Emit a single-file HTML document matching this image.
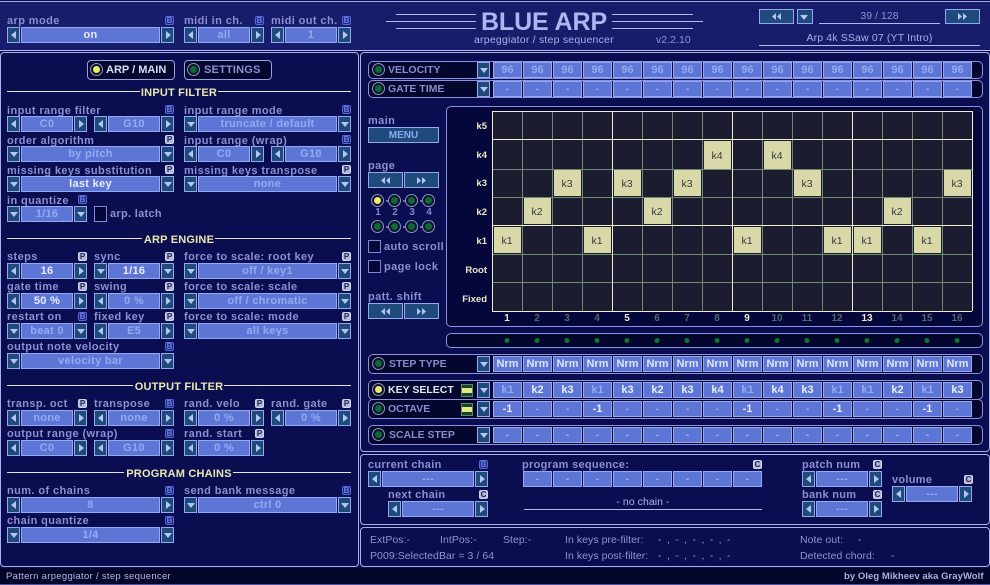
<!DOCTYPE html>
<html><head><meta charset="utf-8"><title>Blue Arp</title>
<style>
*{box-sizing:border-box}
html,body{margin:0;padding:0}
body{width:990px;height:585px;position:relative;overflow:hidden;background:#0a0d50;font-family:"Liberation Sans",sans-serif}
body div,body span{position:absolute}
.hd{left:0;top:1px;width:990px;height:50px;background:#171c6b;border-top:1px solid #a4abe8;border-bottom:1px solid #b4baf0}
.p{border:1px solid #aab0ea;border-radius:4px;background:#0a0d50}
.sb{background:#03042a;height:16px;top:568px;border-bottom:1px solid #4a52a0}
.l{margin-top:1px;font:bold 11px/12px "Liberation Sans",sans-serif;letter-spacing:.4px;color:#8a90d2;white-space:nowrap;height:12px}
.t{font:bold 11px/12px "Liberation Sans",sans-serif;letter-spacing:.2px;color:#e8e8b0;white-space:nowrap;text-align:center;left:7px;width:344px;height:12px}
.ln{height:1px;background:#e4e4d8}
.B,.P{width:9px;height:9px;border-radius:2px;font:bold 8px/8px "Liberation Sans",sans-serif;text-align:center}
.B{background:#20287e;border:1px solid #5468d8;color:#6a80e8}
.P{background:#b4b8d8;border:1px solid #d0d4ec;color:#20245a}
.k{display:flex;gap:1px;height:16px}
.k i,.bt{display:block;width:13px;height:16px;background:#1e4a7c;border:1px solid #93a8f0;flex:none}
.k i{position:relative}
.k b{display:block;flex:none;height:16px;background:#5d76d6;border:1px solid #94a9f4;color:#94aaf0;font:bold 11px/15px "Liberation Sans",sans-serif;letter-spacing:.3px;text-align:center;white-space:nowrap}
.k b.o,.s b.o{color:#e8ecfc}
.w b{width:139px}.h b{width:52px}
.lf::after,.rt::after,.dn::after{content:"";position:absolute}
.lf::after{left:3px;top:3px;border:4px solid transparent;border-left:0;border-right:5px solid #b4c4f4}
.rt::after{left:4px;top:3px;border:4px solid transparent;border-right:0;border-left:5px solid #b4c4f4}
.dn::after{left:2px;top:5px;border:4px solid transparent;border-bottom:0;border-top:5px solid #b4c4f4}
.s{display:flex;gap:1px;left:493px;height:16px}
.s b{display:block;flex:none;width:29px;height:16px;background:#5d76d6;border:1px solid #94a9f4;color:#94aaf0;font:bold 11px/15px "Liberation Sans",sans-serif;text-align:center;white-space:nowrap}
.s.n b{color:#e0e5fa}
.r{left:368px;width:615px;background:#04062e;border:1px solid #8a91e0;border-radius:5px}
.led{width:11px;height:11px;margin:1px;border-radius:50%;background:#0f6a2e;border:2px solid #0a1040;box-shadow:0 0 0 1px #8e96a8}
.led.y{background:#eeee60}
.rl{font:bold 10.5px/12px "Liberation Sans",sans-serif;letter-spacing:0;color:#868ccc;white-space:nowrap;height:12px}
.tb{border:1px solid #98a0e0;border-radius:4px;background:#04062e;height:20px;width:88px;top:60px}
.ck{width:13px;height:13px;border:1px solid #8288cf;background:#05073a}
.bb{height:16px;background:#1e4a7c;border:1px solid #93a8f0;color:#8ea8f0;font:bold 10px/13px "Liberation Sans",sans-serif;display:flex;align-items:center;justify-content:center}
.bb svg{fill:#b4c4f4}
.i{margin-top:1px;font:10.5px/12px "Liberation Sans",sans-serif;letter-spacing:.05px;color:#8e94d4;white-space:nowrap;height:12px}
.hl{background:#b4baec;height:1px}
.g{width:12px;height:13px;background:#14442a;border:1px solid #5a8a5a}
.g::after{content:"";position:absolute;left:0;top:3px;width:10px;height:5px;background:#e8e888}
.num{font:bold 10px/10px "Liberation Sans",sans-serif;text-align:center;width:20px;height:10px;color:#4e6a6a}
.num.o{color:#e8e8d0}
.d{width:2px;height:2px;background:#6a72b0}
</style></head><body>

<div class="hd"></div>
<div class="p" style="left:0;top:52px;width:359px;height:515px"></div>
<div class="p" style="left:360px;top:52px;width:630px;height:400px"></div>
<div class="p" style="left:360px;top:454px;width:630px;height:71px"></div>
<div class="p" style="left:360px;top:527px;width:630px;height:40px"></div>
<div class="sb" style="left:0;width:990px;height:17px"></div>

<!-- header left -->
<div class="l" style="left:7px;top:14px">arp mode</div><div class="B" style="left:165px;top:16px">B</div>
<div class="k w" style="left:7px;top:27px"><i class="lf"></i><b class="o">on</b><i class="rt"></i></div>
<div class="l" style="left:184px;top:14px">midi in ch.</div><div class="B" style="left:255px;top:16px">B</div>
<div class="k h" style="left:184px;top:27px"><i class="lf"></i><b>all</b><i class="rt"></i></div>
<div class="l" style="left:271px;top:14px">midi out ch.</div><div class="B" style="left:342px;top:16px">B</div>
<div class="k h" style="left:271px;top:27px"><i class="lf"></i><b>1</b><i class="rt"></i></div>

<!-- title -->
<div class="hl" style="left:396px;top:14px;width:80px"></div><div class="hl" style="left:386px;top:21px;width:90px"></div><div class="hl" style="left:396px;top:28px;width:80px"></div>
<div class="hl" style="left:612px;top:14px;width:81px"></div><div class="hl" style="left:612px;top:21px;width:91px"></div><div class="hl" style="left:612px;top:28px;width:81px"></div>
<div style="left:476px;top:8px;width:136px;text-align:center;font:bold 25px/28px 'Liberation Sans',sans-serif;letter-spacing:-.1px;color:#aeb6ee;white-space:nowrap">BLUE ARP</div>
<div class="i" style="left:474px;top:33px;color:#aab0e8;letter-spacing:.22px">arpeggiator / step sequencer</div>
<div class="i" style="left:656px;top:33px;color:#8e94d4">v2.2.10</div>
<div class="bb" style="left:759px;top:9px;width:35px;height:15px"><svg width="10" height="7"><path d="M4 0v7L0 3.5zM9 0v7L5 3.5z"/></svg></div>
<div class="bt dn" style="left:797px;top:9px;width:16px;height:15px"></div>
<div class="i" style="left:819px;top:9px;width:121px;text-align:center;color:#8e94d4">39 / 128</div>
<div class="hl" style="left:819px;top:23px;width:121px"></div>
<div class="bb" style="left:945px;top:9px;width:35px;height:15px"><svg width="10" height="7"><path d="M0 0v7L4 3.5zM5 0v7L9 3.5z"/></svg></div>
<div class="i" style="left:759px;top:31px;width:221px;text-align:center;color:#aab0e8;letter-spacing:.15px">Arp 4k SSaw 07 (YT Intro)</div>
<div class="hl" style="left:759px;top:45px;width:221px"></div>

<!-- tabs -->
<div class="tb" style="left:87px"></div><div class="led y" style="left:90px;top:63px"></div><div class="l" style="left:106px;top:63px;color:#d8dcf4;letter-spacing:0">ARP / MAIN</div>
<div class="tb" style="left:184px"></div><div class="led" style="left:187px;top:63px"></div><div class="l" style="left:204px;top:63px;letter-spacing:.2px">SETTINGS</div>

<!-- INPUT FILTER -->
<div class="ln" style="left:7px;top:91px;width:133px"></div><div class="t" style="top:87px">INPUT FILTER</div><div class="ln" style="left:218px;top:91px;width:133px"></div>
<div class="l" style="left:7px;top:104px">input range filter</div><div class="B" style="left:165px;top:105px">B</div>
<div class="k h" style="left:7px;top:116px"><i class="lf"></i><b>C0</b><i class="rt"></i></div>
<div class="k h" style="left:94px;top:116px"><i class="lf"></i><b>G10</b><i class="rt"></i></div>
<div class="l" style="left:184px;top:104px">input range mode</div><div class="B" style="left:342px;top:105px">B</div>
<div class="k w" style="left:184px;top:116px"><i class="dn"></i><b>truncate / default</b><i class="dn"></i></div>
<div class="l" style="left:7px;top:134px">order algorithm</div><div class="P" style="left:165px;top:135px">P</div>
<div class="k w" style="left:7px;top:146px"><i class="dn"></i><b>by pitch</b><i class="dn"></i></div>
<div class="l" style="left:184px;top:134px">input range (wrap)</div><div class="B" style="left:342px;top:135px">B</div>
<div class="k h" style="left:184px;top:146px"><i class="lf"></i><b>C0</b><i class="rt"></i></div>
<div class="k h" style="left:271px;top:146px"><i class="lf"></i><b>G10</b><i class="rt"></i></div>
<div class="l" style="left:7px;top:164px">missing keys substitution</div><div class="P" style="left:165px;top:165px">P</div>
<div class="k w" style="left:7px;top:176px"><i class="dn"></i><b class="o">last key</b><i class="dn"></i></div>
<div class="l" style="left:184px;top:164px">missing keys transpose</div><div class="P" style="left:342px;top:165px">P</div>
<div class="k w" style="left:184px;top:176px"><i class="dn"></i><b>none</b><i class="dn"></i></div>
<div class="l" style="left:7px;top:194px">in quantize</div><div class="B" style="left:78px;top:195px">B</div>
<div class="k h" style="left:7px;top:206px"><i class="dn"></i><b>1/16</b><i class="dn"></i></div>
<div class="ck" style="left:94px;top:206px;height:16px"></div><div class="l" style="left:110px;top:207px;letter-spacing:.3px">arp. latch</div>

<!-- ARP ENGINE -->
<div class="ln" style="left:7px;top:238px;width:135px"></div><div class="t" style="top:234px">ARP ENGINE</div><div class="ln" style="left:215px;top:238px;width:136px"></div>
<div class="l" style="left:7px;top:250px">steps</div><div class="P" style="left:78px;top:252px">P</div>
<div class="k h" style="left:7px;top:263px"><i class="lf"></i><b class="o">16</b><i class="rt"></i></div>
<div class="l" style="left:94px;top:250px">sync</div><div class="P" style="left:165px;top:252px">P</div>
<div class="k h" style="left:94px;top:263px"><i class="dn"></i><b class="o">1/16</b><i class="dn"></i></div>
<div class="l" style="left:184px;top:250px">force to scale: root key</div><div class="P" style="left:342px;top:252px">P</div>
<div class="k w" style="left:184px;top:263px"><i class="dn"></i><b>off / key1</b><i class="dn"></i></div>
<div class="l" style="left:7px;top:280px">gate time</div><div class="P" style="left:78px;top:282px">P</div>
<div class="k h" style="left:7px;top:293px"><i class="lf"></i><b class="o">50 %</b><i class="rt"></i></div>
<div class="l" style="left:94px;top:280px">swing</div><div class="P" style="left:165px;top:282px">P</div>
<div class="k h" style="left:94px;top:293px"><i class="lf"></i><b>0 %</b><i class="rt"></i></div>
<div class="l" style="left:184px;top:280px">force to scale: scale</div><div class="P" style="left:342px;top:282px">P</div>
<div class="k w" style="left:184px;top:293px"><i class="dn"></i><b>off / chromatic</b><i class="dn"></i></div>
<div class="l" style="left:7px;top:310px">restart on</div><div class="B" style="left:78px;top:312px">B</div>
<div class="k h" style="left:7px;top:323px"><i class="dn"></i><b>beat 0</b><i class="dn"></i></div>
<div class="l" style="left:94px;top:310px">fixed key</div><div class="P" style="left:165px;top:312px">P</div>
<div class="k h" style="left:94px;top:323px"><i class="lf"></i><b>E5</b><i class="rt"></i></div>
<div class="l" style="left:184px;top:310px">force to scale: mode</div><div class="P" style="left:342px;top:312px">P</div>
<div class="k w" style="left:184px;top:323px"><i class="dn"></i><b>all keys</b><i class="dn"></i></div>
<div class="l" style="left:7px;top:340px">output note velocity</div><div class="B" style="left:165px;top:342px">B</div>
<div class="k w" style="left:7px;top:353px"><i class="dn"></i><b>velocity bar</b><i class="dn"></i></div>

<!-- OUTPUT FILTER -->
<div class="ln" style="left:7px;top:385px;width:126px"></div><div class="t" style="top:381px">OUTPUT FILTER</div><div class="ln" style="left:224px;top:385px;width:127px"></div>
<div class="l" style="left:7px;top:397px">transp. oct</div><div class="P" style="left:78px;top:399px">P</div>
<div class="k h" style="left:7px;top:410px"><i class="lf"></i><b>none</b><i class="rt"></i></div>
<div class="l" style="left:94px;top:397px">transpose</div><div class="B" style="left:165px;top:399px">B</div>
<div class="k h" style="left:94px;top:410px"><i class="lf"></i><b>none</b><i class="rt"></i></div>
<div class="l" style="left:184px;top:397px">rand. velo</div><div class="P" style="left:255px;top:399px">P</div>
<div class="k h" style="left:184px;top:410px"><i class="lf"></i><b>0 %</b><i class="rt"></i></div>
<div class="l" style="left:271px;top:397px">rand. gate</div><div class="P" style="left:342px;top:399px">P</div>
<div class="k h" style="left:271px;top:410px"><i class="lf"></i><b>0 %</b><i class="rt"></i></div>
<div class="l" style="left:7px;top:427px">output range (wrap)</div><div class="B" style="left:165px;top:429px">B</div>
<div class="k h" style="left:7px;top:440px"><i class="lf"></i><b>C0</b><i class="rt"></i></div>
<div class="k h" style="left:94px;top:440px"><i class="lf"></i><b>G10</b><i class="rt"></i></div>
<div class="l" style="left:184px;top:427px">rand. start</div><div class="P" style="left:255px;top:429px">P</div>
<div class="k h" style="left:184px;top:440px"><i class="lf"></i><b>0 %</b><i class="rt"></i></div>

<!-- PROGRAM CHAINS -->
<div class="ln" style="left:7px;top:472px;width:117px"></div><div class="t" style="top:468px">PROGRAM CHAINS</div><div class="ln" style="left:233px;top:472px;width:118px"></div>
<div class="l" style="left:7px;top:484px">num. of chains</div><div class="B" style="left:165px;top:486px">B</div>
<div class="k w" style="left:7px;top:497px"><i class="lf"></i><b>8</b><i class="rt"></i></div>
<div class="l" style="left:184px;top:484px">send bank message</div><div class="B" style="left:342px;top:486px">B</div>
<div class="k w" style="left:184px;top:497px"><i class="dn"></i><b>ctrl 0</b><i class="dn"></i></div>
<div class="l" style="left:7px;top:514px">chain quantize</div><div class="B" style="left:165px;top:516px">B</div>
<div class="k w" style="left:7px;top:527px"><i class="dn"></i><b>1/4</b><i class="dn"></i></div>

<!-- step rows -->
<div class="r" style="top:61px;height:18px"></div>
<div class="led" style="left:372px;top:63px"></div><div class="rl" style="left:388px;top:64px">VELOCITY</div>
<div class="bt dn" style="left:477px;top:62px;height:16px"></div>
<div class="s" style="top:62px"><b>96</b><b>96</b><b>96</b><b>96</b><b>96</b><b>96</b><b>96</b><b>96</b><b>96</b><b>96</b><b>96</b><b>96</b><b>96</b><b>96</b><b>96</b><b>96</b></div>
<div class="r" style="top:80px;height:18px"></div>
<div class="led" style="left:372px;top:82px"></div><div class="rl" style="left:388px;top:83px">GATE TIME</div>
<div class="bt dn" style="left:477px;top:81px;height:16px"></div>
<div class="s" style="top:81px"><b>-</b><b>-</b><b>-</b><b>-</b><b>-</b><b>-</b><b>-</b><b>-</b><b>-</b><b>-</b><b>-</b><b>-</b><b>-</b><b>-</b><b>-</b><b>-</b></div>

<!-- side -->
<div class="l" style="left:368px;top:114px">main</div>
<div class="bb" style="left:368px;top:127px;width:71px">MENU</div>
<div class="l" style="left:368px;top:159px">page</div>
<div class="bb" style="left:368px;top:172px;width:35px"><svg width="10" height="7"><path d="M4 0v7L0 3.5zM9 0v7L5 3.5z"/></svg></div><div class="bb" style="left:404px;top:172px;width:35px"><svg width="10" height="7"><path d="M0 0v7L4 3.5zM5 0v7L9 3.5z"/></svg></div>
<div class="led y" style="left:371px;top:194px"></div><div class="led" style="left:388px;top:194px"></div><div class="led" style="left:405px;top:194px"></div><div class="led" style="left:422px;top:194px"></div>
<div class="d" style="left:386px;top:200px"></div><div class="d" style="left:403px;top:200px"></div><div class="d" style="left:420px;top:200px"></div>
<div class="num" style="left:368px;top:208px;color:#8288cf">1</div><div class="num" style="left:385px;top:208px;color:#8288cf">2</div><div class="num" style="left:402px;top:208px;color:#8288cf">3</div><div class="num" style="left:419px;top:208px;color:#8288cf">4</div>
<div class="led" style="left:371px;top:220px"></div><div class="led" style="left:388px;top:220px"></div><div class="led" style="left:405px;top:220px"></div><div class="led" style="left:422px;top:220px"></div>
<div class="d" style="left:386px;top:226px"></div><div class="d" style="left:403px;top:226px"></div><div class="d" style="left:420px;top:226px"></div>
<div class="ck" style="left:368px;top:240px"></div><div class="l" style="left:384px;top:240px">auto scroll</div>
<div class="ck" style="left:368px;top:260px"></div><div class="l" style="left:384px;top:260px">page lock</div>
<div class="l" style="left:368px;top:290px">patt. shift</div>
<div class="bb" style="left:368px;top:303px;width:35px"><svg width="10" height="7"><path d="M4 0v7L0 3.5zM9 0v7L5 3.5z"/></svg></div><div class="bb" style="left:404px;top:303px;width:35px"><svg width="10" height="7"><path d="M0 0v7L4 3.5zM5 0v7L9 3.5z"/></svg></div>

<!-- grid panel -->
<div style="left:446px;top:106px;width:537px;height:221px;background:#05073a;border:1px solid #8a91e0;border-radius:5px"></div>
<svg style="position:absolute;left:440px;top:105px" width="540" height="215" xmlns="http://www.w3.org/2000/svg">
<rect x="52" y="6" width="480" height="200" fill="#1c1c30"/>
<g stroke="#6f8a70" stroke-width="1">
<path d="M82.5 6V206M112.5 6V206M142.5 6V206M202.5 6V206M232.5 6V206M262.5 6V206M322.5 6V206M352.5 6V206M382.5 6V206M442.5 6V206M472.5 6V206M502.5 6V206"/>
<path d="M52 64.5H532M52 92.5H532M52 149.5H532M52 177.5H532"/>
</g>
<g stroke="#f0f0d0" stroke-width="1">
<path d="M52.5 6V206M172.5 6V206M292.5 6V206M412.5 6V206M532.5 6V206"/>
<path d="M52 6.5H532M52 34.5H532M52 120.5H532M52 206.5H532"/>
</g>
<g fill="#d8d8a8">
<rect x="54" y="122" width="27" height="26"/><rect x="84" y="93" width="27" height="26"/><rect x="114" y="65" width="27" height="26"/>
<rect x="144" y="122" width="27" height="26"/><rect x="174" y="65" width="27" height="26"/><rect x="204" y="93" width="27" height="26"/>
<rect x="234" y="65" width="27" height="26"/><rect x="264" y="36" width="27" height="28"/><rect x="294" y="122" width="27" height="26"/>
<rect x="324" y="36" width="27" height="28"/><rect x="354" y="65" width="27" height="26"/><rect x="384" y="122" width="27" height="26"/>
<rect x="414" y="122" width="27" height="26"/><rect x="444" y="93" width="27" height="26"/><rect x="474" y="122" width="27" height="26"/>
<rect x="504" y="65" width="27" height="26"/>
</g>
<g font-family="Liberation Sans" font-size="10.5" fill="#3a3a40" text-anchor="middle">
<text x="67" y="139">k1</text><text x="97" y="110">k2</text><text x="127" y="82">k3</text><text x="157" y="139">k1</text>
<text x="187" y="82">k3</text><text x="217" y="110">k2</text><text x="247" y="82">k3</text><text x="277" y="54">k4</text>
<text x="307" y="139">k1</text><text x="337" y="54">k4</text><text x="367" y="82">k3</text><text x="397" y="139">k1</text>
<text x="427" y="139">k1</text><text x="457" y="110">k2</text><text x="487" y="139">k1</text><text x="517" y="82">k3</text>
</g>
<g font-family="Liberation Sans" font-size="9.5" font-weight="bold" fill="#e8e8c8" text-anchor="end">
<text x="47" y="24">k5</text><text x="47" y="53">k4</text><text x="47" y="81">k3</text><text x="47" y="110">k2</text>
<text x="47" y="139">k1</text><text x="47" y="168">Root</text><text x="47" y="197">Fixed</text>
</g>
</svg>
<div class="num o" style="left:497px;top:314px">1</div><div class="num" style="left:527px;top:314px">2</div><div class="num" style="left:557px;top:314px">3</div><div class="num" style="left:587px;top:314px">4</div><div class="num o" style="left:617px;top:314px">5</div><div class="num" style="left:647px;top:314px">6</div><div class="num" style="left:677px;top:314px">7</div><div class="num" style="left:707px;top:314px">8</div><div class="num o" style="left:737px;top:314px">9</div><div class="num" style="left:767px;top:314px">10</div><div class="num" style="left:797px;top:314px">11</div><div class="num" style="left:827px;top:314px">12</div><div class="num o" style="left:857px;top:314px">13</div><div class="num" style="left:887px;top:314px">14</div><div class="num" style="left:917px;top:314px">15</div><div class="num" style="left:947px;top:314px">16</div>

<div style="left:446px;top:333px;width:537px;height:15px;background:#04062e;border:1px solid #8a91e0;border-radius:5px"></div>
<svg style="position:absolute;left:490px;top:335px" width="480" height="11" xmlns="http://www.w3.org/2000/svg"><g fill="#0c7a2c">
<circle cx="17" cy="5.5" r="2.5"/><circle cx="47" cy="5.5" r="2.5"/><circle cx="77" cy="5.5" r="2.5"/><circle cx="107" cy="5.5" r="2.5"/><circle cx="137" cy="5.5" r="2.5"/><circle cx="167" cy="5.5" r="2.5"/><circle cx="197" cy="5.5" r="2.5"/><circle cx="227" cy="5.5" r="2.5"/><circle cx="257" cy="5.5" r="2.5"/><circle cx="287" cy="5.5" r="2.5"/><circle cx="317" cy="5.5" r="2.5"/><circle cx="347" cy="5.5" r="2.5"/><circle cx="377" cy="5.5" r="2.5"/><circle cx="407" cy="5.5" r="2.5"/><circle cx="437" cy="5.5" r="2.5"/><circle cx="467" cy="5.5" r="2.5"/></g></svg>

<div class="r" style="top:354px;height:20px"></div>
<div class="led" style="left:372px;top:357px"></div><div class="rl" style="left:389px;top:358px">STEP TYPE</div>
<div class="bt dn" style="left:477px;top:356px"></div>
<div class="s n" style="top:356px"><b>Nrm</b><b>Nrm</b><b>Nrm</b><b>Nrm</b><b>Nrm</b><b>Nrm</b><b>Nrm</b><b>Nrm</b><b>Nrm</b><b>Nrm</b><b>Nrm</b><b>Nrm</b><b>Nrm</b><b>Nrm</b><b>Nrm</b><b>Nrm</b></div>

<div class="r" style="top:380px;height:20px"></div>
<div class="led y" style="left:372px;top:383px"></div><div class="rl" style="left:388px;top:384px;color:#e0e4f8">KEY SELECT</div>
<div class="g" style="left:461px;top:384px"></div>
<div class="bt dn" style="left:477px;top:382px"></div>
<div class="s" style="top:382px"><b>k1</b><b class="o">k2</b><b class="o">k3</b><b>k1</b><b class="o">k3</b><b class="o">k2</b><b class="o">k3</b><b class="o">k4</b><b>k1</b><b class="o">k4</b><b class="o">k3</b><b>k1</b><b>k1</b><b class="o">k2</b><b>k1</b><b class="o">k3</b></div>
<div class="r" style="top:399px;height:20px"></div>
<div class="led" style="left:372px;top:402px"></div><div class="rl" style="left:388px;top:403px">OCTAVE</div>
<div class="g" style="left:461px;top:403px"></div>
<div class="bt dn" style="left:477px;top:401px"></div>
<div class="s" style="top:401px"><b class="o">-1</b><b>-</b><b>-</b><b class="o">-1</b><b>-</b><b>-</b><b>-</b><b>-</b><b class="o">-1</b><b>-</b><b>-</b><b class="o">-1</b><b>-</b><b>-</b><b class="o">-1</b><b>-</b></div>

<div class="r" style="top:425px;height:20px"></div>
<div class="led" style="left:372px;top:428px"></div><div class="rl" style="left:389px;top:429px">SCALE STEP</div>
<div class="bt dn" style="left:477px;top:427px"></div>
<div class="s" style="top:427px"><b>-</b><b>-</b><b>-</b><b>-</b><b>-</b><b>-</b><b>-</b><b>-</b><b>-</b><b>-</b><b>-</b><b>-</b><b>-</b><b>-</b><b>-</b><b>-</b></div>

<!-- chains -->
<div class="l" style="left:368px;top:458px;letter-spacing:.3px">current chain</div><div class="B" style="left:479px;top:460px">B</div>
<div class="k" style="left:368px;top:471px"><i class="lf"></i><b style="width:92px">---</b><i class="rt"></i></div>
<div class="l" style="left:388px;top:488px;letter-spacing:.3px">next chain</div><div class="P" style="left:479px;top:490px">C</div>
<div class="k" style="left:388px;top:501px"><i class="lf"></i><b style="width:72px">---</b><i class="rt"></i></div>
<div class="l" style="left:522px;top:458px;letter-spacing:.3px">program sequence:</div><div class="P" style="left:753px;top:460px">C</div>
<div class="s" style="left:523px;top:471px"><b>-</b><b>-</b><b>-</b><b>-</b><b>-</b><b>-</b><b>-</b><b>-</b></div>
<div class="i" style="left:524px;top:495px;width:238px;text-align:center;color:#b0b6ea">- no chain -</div>
<div class="hl" style="left:524px;top:509px;width:238px"></div>
<div class="l" style="left:802px;top:458px;letter-spacing:.3px">patch num</div><div class="P" style="left:873px;top:460px">C</div>
<div class="k h" style="left:802px;top:471px"><i class="lf"></i><b>---</b><i class="rt"></i></div>
<div class="l" style="left:802px;top:488px;letter-spacing:.3px">bank num</div><div class="P" style="left:873px;top:490px">C</div>
<div class="k h" style="left:802px;top:501px"><i class="lf"></i><b>---</b><i class="rt"></i></div>
<div class="l" style="left:892px;top:473px;letter-spacing:.3px">volume</div><div class="P" style="left:964px;top:475px">C</div>
<div class="k h" style="left:892px;top:486px"><i class="lf"></i><b>---</b><i class="rt"></i></div>

<!-- info -->
<div class="i" style="left:370px;top:533px">ExtPos:-</div><div class="i" style="left:440px;top:533px">IntPos:-</div><div class="i" style="left:503px;top:533px">Step:-</div><div class="i" style="left:565px;top:533px">In keys pre-filter:</div><div class="i" style="left:658px;top:533px;word-spacing:2.4px">- , - , - , - , -</div><div class="i" style="left:800px;top:533px">Note out:</div><div class="i" style="left:858px;top:533px">-</div>
<div class="i" style="left:370px;top:549px">P009:SelectedBar = 3 / 64</div><div class="i" style="left:565px;top:549px">In keys post-filter:</div><div class="i" style="left:658px;top:549px;word-spacing:2.4px">- , - , - , - , -</div><div class="i" style="left:800px;top:549px">Detected chord:</div><div class="i" style="left:891px;top:549px">-</div>

<!-- status -->
<div class="i" style="left:6px;top:570px;font-size:9.5px;letter-spacing:.3px;color:#b4b8e0">Pattern arpeggiator / step sequencer</div>
<div class="i" style="left:844px;top:570px;font:bold 9.5px/12px 'Liberation Sans',sans-serif;color:#aab0e0">by Oleg Mikheev aka GrayWolf</div>
</body></html>
